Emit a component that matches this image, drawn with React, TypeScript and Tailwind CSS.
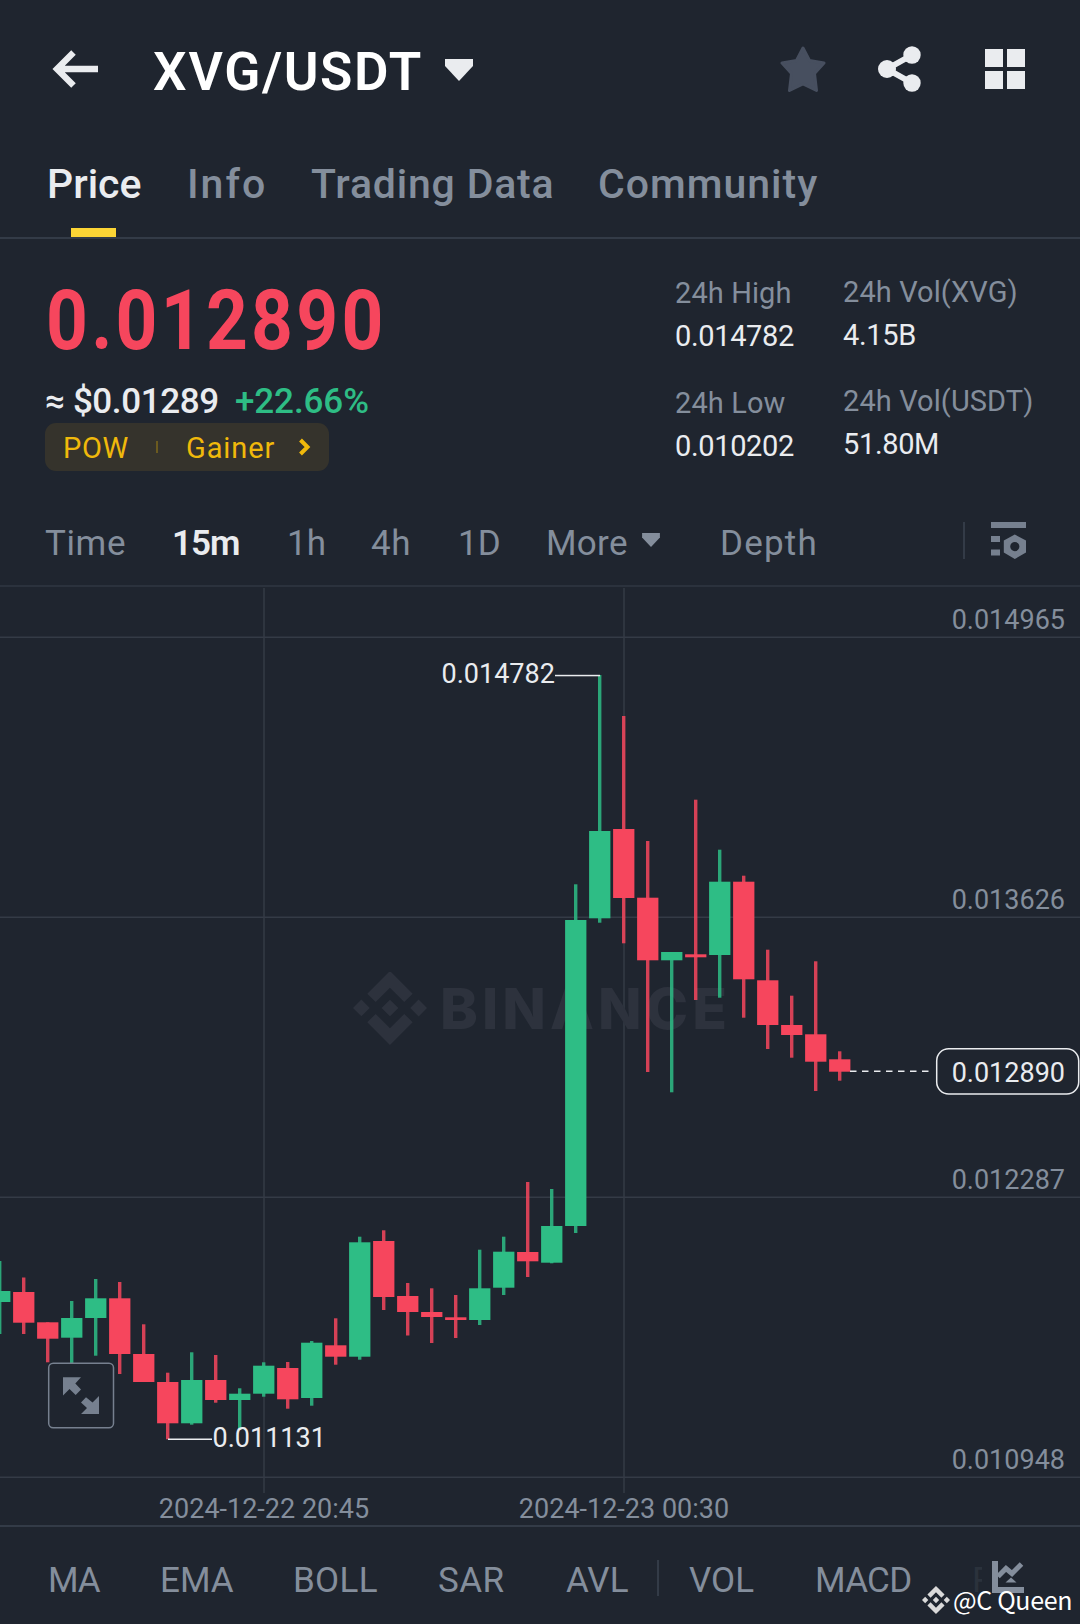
import clsx from "clsx";
import { SiBinance } from "react-icons/si";

type Candle = [high: number, top: number, bottom: number, low: number, up: 0 | 1];

// chart-space y values, one candle every 24px
const candles: Candle[] = [
  [1261, 1291, 1302, 1334, 1],
  [1277.5, 1292, 1322.7, 1334, 0],
  [1322.3, 1322.3, 1338.7, 1362.3, 0],
  [1301, 1318, 1337.7, 1363, 1],
  [1279, 1298.3, 1318, 1355.7, 1],
  [1282, 1298.3, 1354, 1374, 0],
  [1324.3, 1354, 1382, 1382, 0],
  [1372.7, 1382, 1423.3, 1439.3, 0],
  [1352.3, 1380, 1423.3, 1424.7, 1],
  [1355, 1380, 1400, 1402.7, 0],
  [1388.3, 1393.7, 1400, 1430, 1],
  [1362.3, 1365.7, 1393.7, 1396.7, 1],
  [1362, 1368, 1399.3, 1408.7, 0],
  [1341, 1342.7, 1398, 1405.7, 1],
  [1318.3, 1345.3, 1356.7, 1364.7, 0],
  [1236.7, 1242.3, 1356.7, 1359.7, 1],
  [1230.3, 1241, 1297, 1310, 0],
  [1283, 1296, 1312, 1335.5, 0],
  [1288.3, 1312, 1317, 1343, 0],
  [1295, 1317.3, 1320, 1338, 0],
  [1249.7, 1288.3, 1320, 1325, 1],
  [1236.7, 1251.7, 1287.7, 1295, 1],
  [1182, 1252, 1261.3, 1277, 0],
  [1189, 1226, 1262.7, 1263.3, 1],
  [884.3, 920, 1226, 1233, 1],
  [675, 831, 918.3, 922.7, 1],
  [716, 829, 898, 943.3, 0],
  [841, 897.7, 960.3, 1072, 0],
  [952, 952, 960.3, 1092.3, 1],
  [799.7, 954.3, 957.3, 1000, 0],
  [849.7, 881.7, 955, 997.7, 1],
  [875.7, 881.7, 979.3, 1017.7, 0],
  [949.7, 980.3, 1025, 1049, 0],
  [995.7, 1025, 1035, 1057.7, 0],
  [961.3, 1034.3, 1061.7, 1091, 0],
  [1051.3, 1059.3, 1071.7, 1080.7, 0],
];

const gridRows = [
  { y: 637.3, label: "0.014965" },
  { y: 917.3, label: "0.013626" },
  { y: 1197.3, label: "0.012287" },
  { y: 1477.3, label: "0.010948" },
];

const gridCols = [
  { x: 264, label: "2024-12-22 20:45" },
  { x: 624, label: "2024-12-23 00:30" },
];

const stats = [
  { label: "24h High", value: "0.014782", className: "" },
  { label: "24h Vol(XVG)", value: "4.15B", className: "-mt-px" },
  { label: "24h Low", value: "0.010202", className: "" },
  { label: "24h Vol(USDT)", value: "51.80M", className: "-mt-0.5" },
];

function Caret({ className }: { className?: string }) {
  return (
    <svg viewBox="0 0 28 22" className={className} fill="currentColor">
      <path d="M0 0H28V7L14 22L0 7Z" />
    </svg>
  );
}

function Header() {
  return (
    <header className="flex h-[138px] items-center pl-[52px] pr-[55px]">
      <svg viewBox="0 0 46 38" className="h-[38px] w-[46px]" fill="none" stroke="#eaecef" strokeWidth="6.4">
        <path d="M46 19H5M21.5 2.5L5 19L21.5 35.5" />
      </svg>
      <h1 className="ml-[55px] mt-1.5 w-[269px] text-[53px] leading-none font-semibold tracking-[1.600px] whitespace-nowrap text-white">
        XVG/USDT
      </h1>
      <Caret className="ml-[23px] mt-[1px] h-[22px] w-[28px] text-[#eaecef]" />
      <div className="ml-auto flex items-center">
        <svg viewBox="0 0 46 46" className="h-[46px] w-[46px]" fill="#474f5f" stroke="#474f5f" strokeWidth="3" strokeLinejoin="round">
          <path d="M23 2L29.5 14.5L44 17L34.5 27.5L36.5 44.5L23 38L9.500 44.500L11.500 27.500L2 17L16.500 14.500Z" />
        </svg>
        <svg viewBox="0 0 43 46" className="ml-[52px] h-[46px] w-[43px]" fill="#eaecef" stroke="#eaecef">
          <path d="M34 9L9 23L34 37" fill="none" strokeWidth="6" />
          <circle cx="34" cy="9" r="8.700" stroke="none" />
          <circle cx="9" cy="23" r="9" stroke="none" />
          <circle cx="34" cy="37" r="8.700" stroke="none" />
        </svg>
        <div className="ml-[64px] grid grid-cols-2 gap-[4.500px]">
          {[0, 1, 2, 3].map((i) => (
            <span key={i} className="h-[18px] w-[18px] bg-[#eaecef]" />
          ))}
        </div>
      </div>
    </header>
  );
}

function Tabs() {
  return (
    <nav className="flex h-[101px] items-start border-b-2 border-[#333b47] pl-[47px] pt-[26px] text-[41px] leading-none font-medium text-[#848e9c]">
      <div className="relative w-[140px] text-[#eaecef]">
        <span>Price</span>
        <span className="absolute left-[24px] top-[64px] h-[9px] w-[45px] bg-[#fcd535]" />
      </div>
      <span className="w-[124px] tracking-[2px]">Info</span>
      <span className="w-[287px] tracking-[0.8px]">Trading Data</span>
      <span className="tracking-[1px]">Community</span>
    </nav>
  );
}

function Summary() {
  return (
    <section className="flex h-[256px] pl-[45px]">
      <div className="w-[631px] pt-[42px]">
        <div className="ml-[1px] origin-left scale-x-[0.88] text-[83px] leading-[80px] font-bold tracking-[3.700px] text-[#f6465d]">
          0.012890
        </div>
        <div className="mt-[21px] flex text-[35px] leading-[40px] font-medium">
          <span className="w-[190px] whitespace-nowrap tracking-[-0.4px] text-[#eaecef]">≈ $0.01289</span>
          <span className="tracking-[-0.1px] text-[#2ebd85]">+22.66%</span>
        </div>
        <div className="mt-[1px] flex h-[48px] w-[284px] items-center rounded-[11px] bg-[#35332c] pl-[18px] text-[29px] leading-none text-[#f0b90b]">
          <span className="mt-[3px] w-[93px] tracking-[0.600px]">POW</span>
          <span className="h-[12px] w-[2px] bg-[#6b5a1f]" />
          <span className="mt-[3px] ml-[28px] w-[113px] tracking-[0.900px]">Gainer</span>
          <svg viewBox="0 0 12 18" className="h-[18px] w-[12px]" fill="none" stroke="currentColor" strokeWidth="4">
            <path d="M1.500 2L8.500 9L1.500 16" />
          </svg>
        </div>
      </div>
      <div className="-ml-[1px] grid h-[220px] grid-cols-[168px_220px] grid-rows-[110px_110px] pt-[37px]">
        {stats.map((s) => (
          <div key={s.label} className={clsx("whitespace-nowrap", s.className)}>
            <div className="text-[29px] leading-[34px] tracking-[0.100px] text-[#848e9c]">{s.label}</div>
            <div className="mt-[9px] text-[29px] leading-[34px] tracking-[-0.350px] text-[#eaecef]">{s.value}</div>
          </div>
        ))}
      </div>
    </section>
  );
}

function Intervals() {
  return (
    <div className="flex h-[92px] items-center border-b-2 border-[#2b323d] pl-[45px] text-[35px] leading-none text-[#848e9c]">
      <div className="mt-[7px] flex">
        <span className="w-[127px] tracking-[0.600px]">Time</span>
        <span className="w-[115px] font-semibold tracking-[-1px] text-[#eaecef]">15m</span>
        <span className="w-[84px]">1h</span>
        <span className="w-[87px] tracking-[0.500px]">4h</span>
        <span className="w-[88px]">1D</span>
        <span className="w-[96px] tracking-[0.300px]">More</span>
      </div>
      <Caret className="mb-[1px] h-[14px] w-[18px]" />
      <span className="mt-[7px] ml-[60px] w-[243px] tracking-[1.200px]">Depth</span>
      <span className="h-[37px] w-[2px] bg-[#333b47]" />
      <svg viewBox="0 0 35 37" className="ml-[26px] h-[37px] w-[35px]" fill="#76808f">
        <path d="M0 0H35V6H0ZM0 14H9V20H0ZM0 27.500H9V33.500H0Z" />
        <path fillRule="evenodd" d="M23.800 12.500L35 18.500V30.500L23.800 37L12.800 30.500V18.500ZM23.800 20A4.600 4.600 0 1 0 23.800 29.200A4.600 4.600 0 1 0 23.800 20Z" />
      </svg>
    </div>
  );
}

function Chart() {
  return (
    <svg viewBox="0 587 1080 938" className="block h-[938px] w-full" fontSize="27">
      <g stroke="#343b46" strokeWidth="1.500">
        {gridRows.map((r) => (
          <line key={r.y} x1="0" x2="1080" y1={r.y} y2={r.y} />
        ))}
        {gridCols.map((c) => (
          <line key={c.x} x1={c.x} x2={c.x} y1="588" y2="1493" />
        ))}
      </g>

      <SiBinance x="353" y="971" size="74" className="text-[#2d323d]" />
      <text x="440" y="1028.500" fill="#2d323d" fontFamily="Inter" fontSize="57" fontWeight="800" textLength="287">
        BINANCE
      </text>

      {candles.map(([high, top, bottom, low, up], i) => {
        const x = i * 24 - 0.3;
        return (
          <g key={i} fill={up ? "#2ebd85" : "#f6465d"}>
            <rect x={x - 1.7} y={high} width="3.400" height={low - high} opacity="0.850" />
            <rect x={x - 10.6} y={top} width="21.300" height={bottom - top} />
          </g>
        );
      })}

      <g fill="#848e9c">
        {gridRows.map((r) => (
          <text key={r.label} x="1065" y={r.y - 8.5} textAnchor="end">
            {r.label}
          </text>
        ))}
        {gridCols.map((c) => (
          <text key={c.label} x={c.x} y="1517.500" textAnchor="middle">
            {c.label}
          </text>
        ))}
      </g>

      <g fill="#eaecef">
        <text x="441.500" y="683">0.014782</text>
        <rect x="555" y="674.800" width="45" height="1.500" />
        <text x="212.500" y="1447">0.011131</text>
        <rect x="168" y="1438.500" width="44" height="1.500" />
      </g>

      {/* last price */}
      <line x1="850" x2="930" y1="1071.300" y2="1071.300" stroke="#eaecef" strokeWidth="1.500" strokeDasharray="6.500 5.500" />
      <rect x="936.700" y="1048.700" width="142" height="45.300" rx="12" fill="#1f252f" stroke="#eaecef" strokeWidth="1.500" />
      <text x="1065" y="1082" textAnchor="end" fill="#eaecef">
        0.012890
      </text>

      {/* fullscreen toggle */}
      <rect x="48.700" y="1363.200" width="64.800" height="64.600" rx="4.500" fill="#1f252f" stroke="#76808f" strokeWidth="1.500" />
      <g fill="#76808f">
        <path d="M63 1377.300H81L75.300 1383.500L81 1389.500L75.700 1395L69.500 1389L63 1395.500Z" />
        <path d="M99 1414H81L87 1408L81 1402.500L86 1397.300L92.500 1402.500L99 1396Z" />
      </g>
    </svg>
  );
}

function Indicators() {
  return (
    <footer className="relative flex h-[99px] items-start border-t-2 border-[#333b47] pl-[48px] pt-[34px] text-[35px] leading-[40px] text-[#848e9c]">
      <span className="w-[112px] tracking-[-1px]">MA</span>
      <span className="w-[133px]">EMA</span>
      <span className="w-[145px] tracking-[0.300px]">BOLL</span>
      <span className="w-[128px] tracking-[0.400px]">SAR</span>
      <span className="w-[91px]">AVL</span>
      <span className="-mt-[1px] h-[36px] w-[2px] bg-[#333b47]" />
      <span className="ml-[30px] w-[126px]">VOL</span>
      <span className="w-[157px] tracking-[-0.700px]">MACD</span>
      <span className="w-[10px] overflow-hidden text-[#2b323c]">R</span>
      <svg viewBox="0 0 32 32" className="ml-[10px] h-[32px] w-[32px]" fill="currentColor">
        <path d="M0 0H6V26H32V32H0Z" />
        <path d="M6 15.500L14 7.500L20 12.500L29.500 3" fill="none" stroke="currentColor" strokeWidth="5" />
        <path d="M13.500 21.500L19 16.500L24.500 21.500Z" />
      </svg>
      <div className="absolute left-[922px] top-[57px] flex items-center font-['Noto_Sans_CJK_SC',sans-serif] text-[25px] leading-[32px] tracking-[-0.350px] whitespace-nowrap text-white">
        <SiBinance className="h-[28px] w-[28px] text-[#d9d9d9]" />
        <span className="-mt-[1px] ml-[3px]">@C Queen</span>
      </div>
    </footer>
  );
}

export default function App() {
  return (
    <main className="h-[1624px] w-[1080px] overflow-hidden bg-[#1f252f] font-[Roboto,sans-serif]">
      <Header />
      <Tabs />
      <Summary />
      <Intervals />
      <Chart />
      <Indicators />
    </main>
  );
}
